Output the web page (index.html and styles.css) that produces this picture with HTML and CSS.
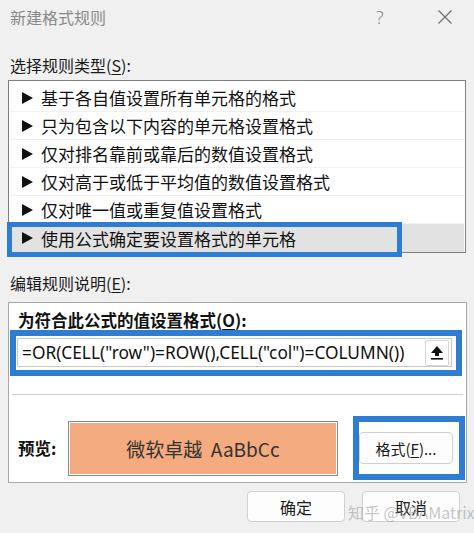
FILE: index.html
```html
<!DOCTYPE html>
<html lang="zh">
<head>
<meta charset="utf-8">
<link rel="stylesheet" href="styles.css">
</head>
<body>
<div class="dialog">
  <div class="titlebar">
    <span class="title">新建格式规则</span>
    <span class="help">?</span>
    <span class="close"><svg width="16" height="16" viewBox="0 0 16 16"><path d="M1.5 1.5 L14.5 14.5 M14.5 1.5 L1.5 14.5" stroke="#6f6f6f" stroke-width="1.2" fill="none"/></svg></span>
  </div>

  <div class="label first">选择规则类型(<u>S</u>):</div>
  <div class="listbox">
    <div class="row"><svg class="tri" width="11" height="12" viewBox="0 0 11 12"><polygon points="0,0 11,6 0,12" fill="#111"/></svg>基于各自值设置所有单元格的格式</div>
    <div class="row"><svg class="tri" width="11" height="12" viewBox="0 0 11 12"><polygon points="0,0 11,6 0,12" fill="#111"/></svg>只为包含以下内容的单元格设置格式</div>
    <div class="row"><svg class="tri" width="11" height="12" viewBox="0 0 11 12"><polygon points="0,0 11,6 0,12" fill="#111"/></svg>仅对排名靠前或靠后的数值设置格式</div>
    <div class="row"><svg class="tri" width="11" height="12" viewBox="0 0 11 12"><polygon points="0,0 11,6 0,12" fill="#111"/></svg>仅对高于或低于平均值的数值设置格式</div>
    <div class="row"><svg class="tri" width="11" height="12" viewBox="0 0 11 12"><polygon points="0,0 11,6 0,12" fill="#111"/></svg>仅对唯一值或重复值设置格式</div>
    <div class="row selected"><svg class="tri" width="11" height="12" viewBox="0 0 11 12"><polygon points="0,0 11,6 0,12" fill="#111"/></svg>使用公式确定要设置格式的单元格</div>
    <div class="mark-row"></div>
  </div>

  <div class="label second">编辑规则说明(<u>E</u>):</div>
  <div class="panel">
    <div class="bold-label">为符合此公式的值设置格式(<u>O</u>):</div>
    <div class="mark-formula">
      <div class="formula">
        <span class="formula-text">=OR(CELL("row")=ROW(),CELL("col")=COLUMN())</span>
        <span class="collapse"><svg width="12" height="14" viewBox="0 0 12 14"><polygon points="6,0 12,7 8,7 8,10 4,10 4,7 0,7" fill="#111"/><rect x="0" y="12" width="12" height="1.6" fill="#111"/></svg></span>
      </div>
    </div>
    <div class="divider"></div>
    <div class="preview-row">
      <span class="preview-label">预览:</span>
      <div class="preview">微软卓越&nbsp;&nbsp;AaBbCc</div>
      <div class="mark-button"><button class="btn fmt">格式(<u>F</u>)...</button></div>
    </div>
  </div>

  <div class="footer">
    <button class="btn ok">确定</button>
    <button class="btn cancel">取消</button>
  </div>
  <div class="watermark">知乎 @VBAMatrix</div>
</div>
</body>
</html>
```
FILE: styles.css
```css
* { box-sizing: border-box; }
html, body { margin: 0; padding: 0; }
body {
  width: 474px;
  height: 533px;
  background: #efefef;
  font-family: "Noto Sans CJK SC", "Noto Sans", sans-serif;
  color: #1a1a1a;
  overflow: hidden;
}
.dialog {
  position: relative;
  width: 474px;
  height: 533px;
  background: #f0f0f0;
}
.titlebar {
  height: 33px;
  display: flex;
  align-items: center;
  padding-left: 10px;
}
.title {
  font-size: 16px;
  color: #8a8a8a;
  flex: 1;
}
.help {
  font-family: "Noto Sans", sans-serif;
  font-size: 18px;
  font-weight: 300;
  color: #8a8a8a;
  width: 20px;
  margin-right: 41px;
}
.close {
  display: flex;
  margin-right: 21px;
}
.label {
  font-size: 16px;
  line-height: 24px;
  padding-left: 10px;
  color: #1a1a1a;
}
.label u, .bold-label u, .btn u { text-decoration: underline; text-underline-offset: 2px; }
.label.first { margin-top: 20px; margin-bottom: 3px; }
.label.second { margin-top: 18px; margin-bottom: 7px; }

.listbox {
  position: relative;
  margin: 0 8px;
  height: 173px;
  border: 1px solid #7f7f7f;
  background: #fff;
  padding-top: 3px;
}
.row {
  height: 28px;
  display: flex;
  align-items: center;
  font-size: 17px;
  padding-left: 12px;
  margin: 0 1px;
  border-bottom: 1px solid #f0f0f0;
  color: #111;
}
.row.selected { background: #e2e2e2; border-bottom: none; }
.tri { margin-right: 8px; flex: none; }
.mark-row {
  position: absolute;
  left: -2px;
  top: 141px;
  width: 395px;
  height: 35px;
  border: 5px solid #2e7dd1;
}

.panel {
  margin: 0 7px 0 8px;
  height: 181px;
  border: 1px solid #a8a8a8;
  background: #fff;
  padding-top: 8px;
}
.bold-label {
  font-size: 16.5px;
  font-weight: 700;
  line-height: 19px;
  padding-left: 9px;
  color: #111;
}
.mark-formula {
  margin: 0 4px 0 1px;
  height: 46px;
  border: 6px solid #2e7dd1;
  padding: 2px 4px 3px 1px;
  background: #fff;
}
.formula {
  height: 29px;
  border: 1px solid #c8c8c8;
  display: flex;
  align-items: center;
  padding-left: 4px;
}
.formula-text {
  flex: 1;
  font-family: "Noto Sans", sans-serif;
  font-size: 17.3px;
  color: #111;
  white-space: nowrap;
}
.collapse {
  width: 24px;
  height: 26px;
  border: 1px solid #d4d4d4;
  border-radius: 2px;
  display: flex;
  align-items: center;
  justify-content: center;
  margin-right: 2px;
}
.divider {
  margin: 18px 3px 0 3px;
  height: 1px;
  background: #cfcfcf;
}
.preview-row {
  margin-top: 21px;
  height: 64px;
  display: flex;
  align-items: center;
  padding-left: 9px;
}
.preview-label {
  font-size: 16.5px;
  font-weight: 700;
  width: 50px;
  color: #111;
}
.preview {
  width: 270px;
  height: 55px;
  border: 1px solid #8a8a8a;
  box-shadow: inset 0 0 0 1px #fff;
  background: #f4ab7f;
  display: flex;
  align-items: center;
  justify-content: center;
  font-size: 19px;
  color: #333;
  margin-right: 15px;
}
.mark-button {
  width: 112px;
  height: 64px;
  border: 6px solid #2e7dd1;
  padding: 10px 6px 10px 0;
  background: #fff;
}
.btn {
  font-family: "Noto Sans CJK SC", "Noto Sans", sans-serif;
  background: #fdfdfd;
  border: 1px solid #d0d0d0;
  border-radius: 4px;
  color: #1a1a1a;
  padding: 0;
}
.btn.fmt {
  width: 94px;
  height: 32px;
  font-size: 15px;
}
.footer {
  display: flex;
  justify-content: flex-end;
  gap: 17px;
  margin-top: 8px;
  padding-right: 14px;
}
.btn.ok, .btn.cancel {
  width: 98px;
  height: 31px;
  font-size: 16px;
}
.watermark {
  position: absolute;
  left: 348px;
  top: 500px;
  font-family: "Noto Sans CJK SC", "Noto Sans", sans-serif;
  font-size: 16px;
  color: rgba(150, 150, 150, 0.55);
  white-space: nowrap;
}
```
